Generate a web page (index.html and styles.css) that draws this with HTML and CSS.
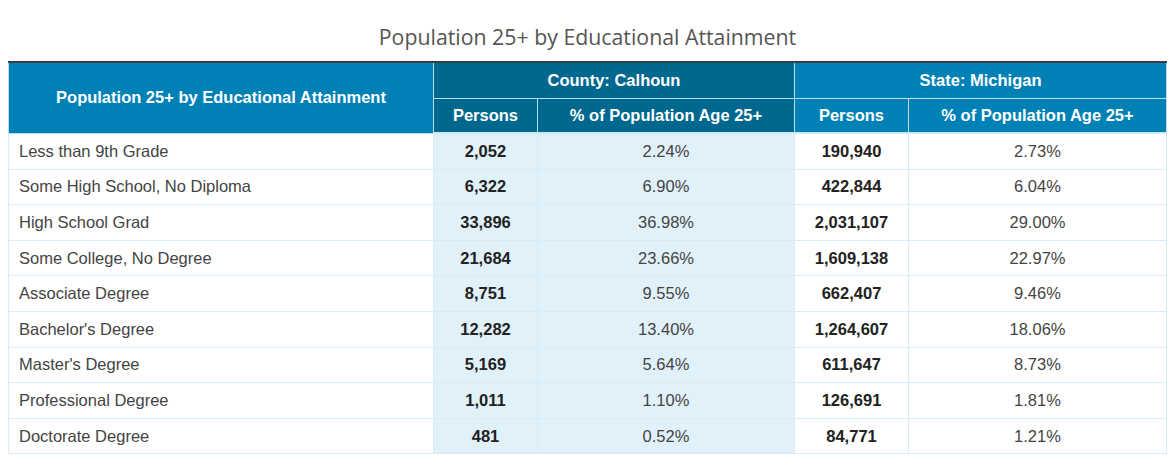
FILE: index.html
```html
<!DOCTYPE html>
<html lang="en">
<head>
<meta charset="utf-8">
<title>Population 25+ by Educational Attainment</title>
<link rel="stylesheet" href="styles.css">
</head>
<body>
<h1 class="title">Population 25+ by Educational Attainment</h1>
<table class="data">
  <colgroup>
    <col class="col-label">
    <col class="col-cpersons">
    <col class="col-cpct">
    <col class="col-spersons">
    <col class="col-spct">
  </colgroup>
  <thead>
    <tr>
      <th rowspan="2" class="h-main">Population 25+ by Educational Attainment</th>
      <th colspan="2" class="h-county">County: Calhoun</th>
      <th colspan="2" class="h-state">State: Michigan</th>
    </tr>
    <tr>
      <th class="h-county">Persons</th>
      <th class="h-county">% of Population Age 25+</th>
      <th class="h-state">Persons</th>
      <th class="h-state">% of Population Age 25+</th>
    </tr>
  </thead>
  <tbody>
    <tr><td class="label">Less than 9th Grade</td><td class="num county">2,052</td><td class="pct county">2.24%</td><td class="num">190,940</td><td class="pct">2.73%</td></tr>
    <tr><td class="label">Some High School, No Diploma</td><td class="num county">6,322</td><td class="pct county">6.90%</td><td class="num">422,844</td><td class="pct">6.04%</td></tr>
    <tr><td class="label">High School Grad</td><td class="num county">33,896</td><td class="pct county">36.98%</td><td class="num">2,031,107</td><td class="pct">29.00%</td></tr>
    <tr><td class="label">Some College, No Degree</td><td class="num county">21,684</td><td class="pct county">23.66%</td><td class="num">1,609,138</td><td class="pct">22.97%</td></tr>
    <tr><td class="label">Associate Degree</td><td class="num county">8,751</td><td class="pct county">9.55%</td><td class="num">662,407</td><td class="pct">9.46%</td></tr>
    <tr><td class="label">Bachelor's Degree</td><td class="num county">12,282</td><td class="pct county">13.40%</td><td class="num">1,264,607</td><td class="pct">18.06%</td></tr>
    <tr><td class="label">Master's Degree</td><td class="num county">5,169</td><td class="pct county">5.64%</td><td class="num">611,647</td><td class="pct">8.73%</td></tr>
    <tr><td class="label">Professional Degree</td><td class="num county">1,011</td><td class="pct county">1.10%</td><td class="num">126,691</td><td class="pct">1.81%</td></tr>
    <tr><td class="label">Doctorate Degree</td><td class="num county">481</td><td class="pct county">0.52%</td><td class="num">84,771</td><td class="pct">1.21%</td></tr>
  </tbody>
</table>
</body>
</html>
```

FILE: styles.css
```css
html, body {
  margin: 0;
  padding: 0;
  background: #ffffff;
}
body {
  padding: 0 8px;
  font-family: "Liberation Sans", Arial, sans-serif;
}
.title {
  margin: 0;
  padding-top: 22px;
  height: 39px;
  line-height: 30px;
  text-align: center;
  font-family: "Open Sans", "Liberation Sans", sans-serif;
  font-weight: 400;
  font-size: 21.3px;
  color: #555555;
}
.data {
  width: 100%;
  border-collapse: collapse;
  table-layout: fixed;
  font-size: 16.5px;
  border-top: 2px solid #3a3f44;
}
.col-label { width: 425px; }
.col-cpersons { width: 104px; }
.col-cpct { width: 257px; }
.col-spersons { width: 114px; }
.col-spct { width: auto; }
.data th {
  color: #ffffff;
  font-weight: 700;
  font-size: 16.5px;
  text-align: center;
  border: 1px solid #b9dcef;
  padding: 0 4px;
  white-space: nowrap;
}
.data thead tr:first-child th {
  height: 35px;
  border-top: 2px solid #3a3f44;
}
.data thead tr:last-child th {
  height: 33px;
  border-bottom: 2px solid #cde8f6;
}
.h-main { background: #0081b6; }
.h-county { background: #00688f; }
.h-state { background: #0081b6; }
.data td {
  height: 34.6px;
  border: 1px solid #d6edf8;
  color: #444444;
  padding: 0 10px;
  white-space: nowrap;
}
.label { text-align: left; }
.num {
  text-align: center;
  font-weight: 700;
  color: #222222 !important;
}
.pct { text-align: center; }
.county { background: #e1f1fa; }
```
